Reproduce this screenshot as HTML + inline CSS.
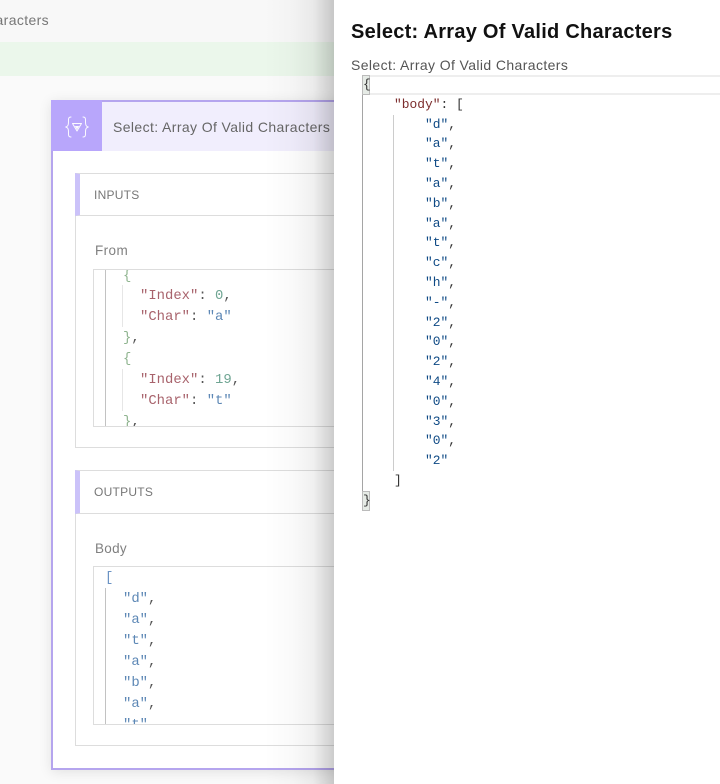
<!DOCTYPE html>
<html><head><meta charset="utf-8"><style>
html,body{margin:0;padding:0;background:#fafafa}
body{width:720px;height:784px;position:relative;overflow:hidden;font-family:"Liberation Sans",sans-serif}
#w{left:0;top:0;width:720px;height:784px;overflow:hidden;filter:blur(.3px);background:#fafafa}
div{position:absolute;box-sizing:border-box}
.t{white-space:pre;line-height:20px;height:20px}
.m{font-family:"Liberation Mono",monospace;white-space:pre}
.lm{font-size:13.9px;line-height:21px;height:21px;left:0}
.rm{font-size:12.92px;line-height:20px;height:20px;color:#0f4a85}
.k{color:#a8636c}.s{color:#5c87b5}.n{color:#6fa593}.g{color:#8fb48f}.c{color:#555}.b{color:#6b93c4}
.k2{color:#7b2c2c}.p{color:#333}
</style></head><body><div id="w">
<div style="left:0;top:0;width:720px;height:42px;background:#f8f8f8"></div>
<div class="t" style="left:-16px;top:10px;font-size:14px;color:#777;letter-spacing:.36px;width:65px;overflow:hidden;direction:rtl">Characters</div>
<div style="left:0;top:42px;width:720px;height:34px;background:#ebf7eb"></div>

<!-- card -->
<div style="left:51px;top:100px;width:400px;height:670px;background:#fff;border:2px solid #b5a5ee;box-shadow:0 2px 12px rgba(0,0,0,.1)"></div>
<div style="left:102px;top:102px;width:300px;height:49px;background:#f1eefd"></div>
<div style="left:51px;top:100px;width:51px;height:51px;background:#b8a6fb"></div>
<svg style="position:absolute;left:62px;top:112px" width="30" height="30" viewBox="0 0 30 30" fill="none" stroke="#fff" stroke-width="1" stroke-linecap="round" opacity=".95">
<path d="M9 5 C6 5 6.500 7.500 6.500 10 C6.500 13 6 14.500 3.500 15 C6 15.500 6.500 17 6.500 20 C6.500 22.500 6 25 9 25"/>
<path d="M21 5 C24 5 23.500 7.500 23.500 10 C23.500 13 24 14.500 26.500 15 C24 15.500 23.500 17 23.500 20 C23.500 22.500 24 25 21 25"/>
<path d="M10.500 11.500 H19.500 L15 19 Z" stroke-linejoin="round"/>
<path d="M12.800 14 H17.200 L15 17.500 Z" fill="#fff" stroke="none"/>
</svg>
<div class="t" style="left:113px;top:117px;font-size:14px;color:#666;letter-spacing:.39px">Select: Array Of Valid Characters</div>

<!-- inputs -->
<div style="left:75px;top:173px;width:340px;height:275px;border:1px solid #ddd;background:#fff"></div>
<div style="left:75px;top:173px;width:340px;height:43px;border:1px solid #ddd;border-left:5px solid #cbc2f9;background:#fff"></div>
<div class="t" style="left:94px;top:185px;font-size:12px;color:#777;letter-spacing:.25px">INPUTS</div>
<div class="t" style="left:95px;top:241px;font-size:13.500px;color:#808080;letter-spacing:.4px">From</div>
<div style="left:93px;top:269px;width:320px;height:158px;border:1px solid #ddd;background:#fff;overflow:hidden">
<div style="left:11px;top:0;width:1px;height:157px;background:#c2c2c2"></div>
<div style="left:28px;top:15px;width:1px;height:42px;background:#e6e6e6"></div>
<div style="left:28px;top:99px;width:1px;height:42px;background:#e6e6e6"></div>
<div class="m lm g" style="left:29px;top:-4px">{</div>
<div class="m lm" style="left:46px;top:16px"><span class="k">"Index"</span><span class="c">: </span><span class="n">0</span><span class="c">,</span></div>
<div class="m lm" style="left:46px;top:37px"><span class="k">"Char"</span><span class="c">: </span><span class="s">"a"</span></div>
<div class="m lm" style="left:29px;top:58px"><span class="g">}</span><span class="c">,</span></div>
<div class="m lm g" style="left:29px;top:79px">{</div>
<div class="m lm" style="left:46px;top:100px"><span class="k">"Index"</span><span class="c">: </span><span class="n">19</span><span class="c">,</span></div>
<div class="m lm" style="left:46px;top:121px"><span class="k">"Char"</span><span class="c">: </span><span class="s">"t"</span></div>
<div class="m lm" style="left:29px;top:142px"><span class="g">}</span><span class="c">,</span></div>
</div>

<!-- outputs -->
<div style="left:75px;top:470px;width:340px;height:276px;border:1px solid #ddd;background:#fff"></div>
<div style="left:75px;top:470px;width:340px;height:44px;border:1px solid #ddd;border-left:5px solid #cbc2f9;background:#fff"></div>
<div class="t" style="left:94px;top:482px;font-size:12px;color:#777;letter-spacing:.25px">OUTPUTS</div>
<div class="t" style="left:95px;top:539px;font-size:13.500px;color:#808080;letter-spacing:.3px">Body</div>
<div style="left:93px;top:566px;width:320px;height:159px;border:1px solid #ddd;background:#fff;overflow:hidden">
<div style="left:11px;top:21px;width:1px;height:137px;background:#c2c2c2"></div>
<div class="m lm b" style="left:11px;top:1px">[</div>
<div class="m lm" style="left:29px;top:22px"><span class="s">"d"</span><span class="c">,</span></div>
<div class="m lm" style="left:29px;top:43px"><span class="s">"a"</span><span class="c">,</span></div>
<div class="m lm" style="left:29px;top:64px"><span class="s">"t"</span><span class="c">,</span></div>
<div class="m lm" style="left:29px;top:85px"><span class="s">"a"</span><span class="c">,</span></div>
<div class="m lm" style="left:29px;top:106px"><span class="s">"b"</span><span class="c">,</span></div>
<div class="m lm" style="left:29px;top:127px"><span class="s">"a"</span><span class="c">,</span></div>
<div class="m lm" style="left:29px;top:148px"><span class="s">"t"</span><span class="c">,</span></div>
</div>

<!-- panel shadow -->
<div style="left:264px;top:0;width:70px;height:784px;background:linear-gradient(to right,rgba(0,0,0,0),rgba(0,0,0,.02) 40%,rgba(0,0,0,.06) 70%,rgba(0,0,0,.2))"></div>

<!-- panel -->
<div style="left:334px;top:0;width:386px;height:784px;background:#fff"></div>
<div class="t" style="left:351px;top:18px;height:28px;line-height:28px;font-size:20px;font-weight:bold;color:#111;letter-spacing:.265px">Select: Array Of Valid Characters</div>
<div class="t" style="left:351px;top:55px;font-size:14px;color:#555;letter-spacing:.39px">Select: Array Of Valid Characters</div>
<div style="left:362px;top:75px;width:358px;height:20px;border:2px solid #eee;border-right:0"></div>
<div style="left:362px;top:75px;width:8px;height:20px;background:#e6ebe6;border:1px solid #bbb"></div>
<div style="left:362px;top:95px;width:1px;height:416px;background:#a5a5a5"></div>
<div style="left:393px;top:115px;width:1px;height:356px;background:#ccc"></div>
<div style="left:362px;top:491px;width:8px;height:20px;background:#e6ebe6;border:1px solid #bbb"></div>
<div class="m rm" style="left:363px;top:75px;color:#333">{</div>
<div class="m rm" style="left:394px;top:95px"><span class="k2">"body"</span><span class="p">: [</span></div>
<div class="m rm" style="left:425px;top:114.500px">"d"<span class="p">,</span></div>
<div class="m rm" style="left:425px;top:134.300px">"a"<span class="p">,</span></div>
<div class="m rm" style="left:425px;top:154.100px">"t"<span class="p">,</span></div>
<div class="m rm" style="left:425px;top:173.900px">"a"<span class="p">,</span></div>
<div class="m rm" style="left:425px;top:193.700px">"b"<span class="p">,</span></div>
<div class="m rm" style="left:425px;top:213.500px">"a"<span class="p">,</span></div>
<div class="m rm" style="left:425px;top:233.300px">"t"<span class="p">,</span></div>
<div class="m rm" style="left:425px;top:253.100px">"c"<span class="p">,</span></div>
<div class="m rm" style="left:425px;top:272.900px">"h"<span class="p">,</span></div>
<div class="m rm" style="left:425px;top:292.700px">"-"<span class="p">,</span></div>
<div class="m rm" style="left:425px;top:312.500px">"2"<span class="p">,</span></div>
<div class="m rm" style="left:425px;top:332.300px">"0"<span class="p">,</span></div>
<div class="m rm" style="left:425px;top:352.100px">"2"<span class="p">,</span></div>
<div class="m rm" style="left:425px;top:371.900px">"4"<span class="p">,</span></div>
<div class="m rm" style="left:425px;top:391.700px">"0"<span class="p">,</span></div>
<div class="m rm" style="left:425px;top:411.500px">"3"<span class="p">,</span></div>
<div class="m rm" style="left:425px;top:431.300px">"0"<span class="p">,</span></div>
<div class="m rm" style="left:425px;top:451.100px">"2"</div>
<div class="m rm" style="left:394px;top:471px;color:#333">]</div>
<div class="m rm" style="left:363px;top:491px;color:#333">}</div>
</div></body></html>
